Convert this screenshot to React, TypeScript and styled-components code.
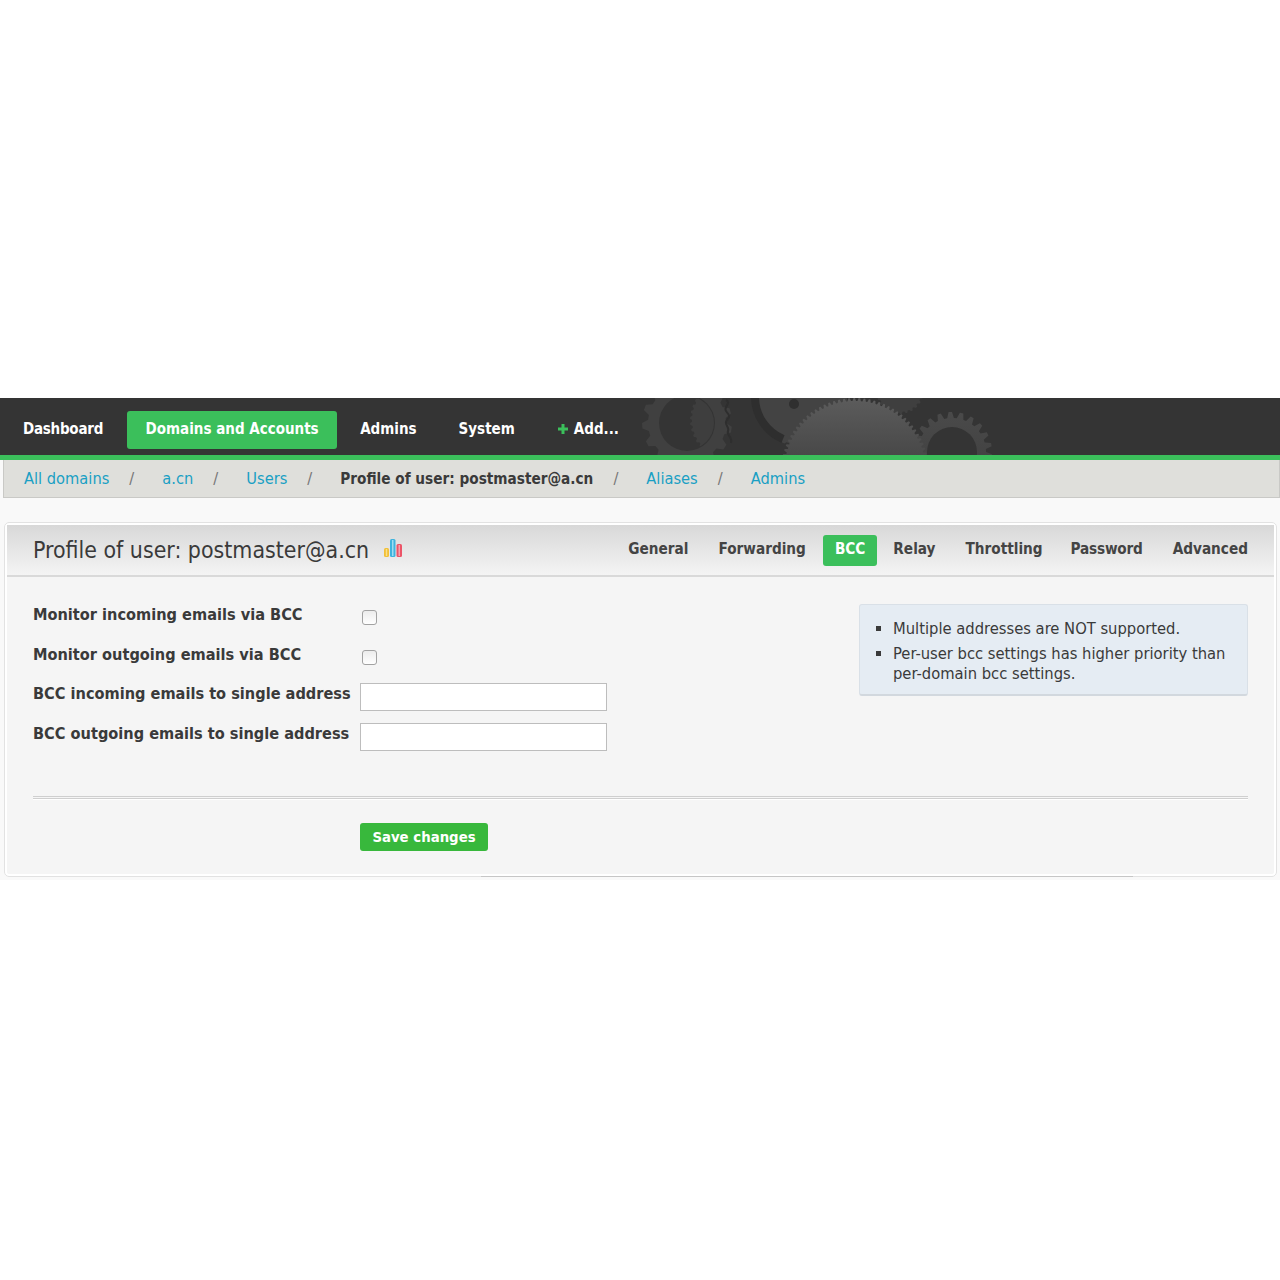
import styled, { createGlobalStyle } from "styled-components";

const GlobalStyle = createGlobalStyle`
  html, body { margin: 0; padding: 0; background: #fff; }
  body { font-family: "DejaVu Sans Condensed", "Noto Sans", sans-serif; color: #333; }
`;

const Page = styled.div`
  min-height: 1280px;
  display: flex;
  flex-direction: column;
  justify-content: center;
`;

const Shot = styled.div`
  height: 482px;
  margin-top: -2px;
  background: #f9f9f9;
  display: flex;
  flex-direction: column;
`;

const TopBar = styled.nav`
  position: relative;
  height: 62px;
  flex: none;
  box-sizing: border-box;
  background: #343434;
  border-bottom: 5px solid #3bbf5b;
  display: flex;
  align-items: flex-start;
  gap: 6px;
  padding: 13px 0 0 5px;
  overflow: hidden;
`;

const NavItem = styled.a<{ $active?: boolean; $tight?: boolean }>`
  position: relative;
  height: 38px;
  line-height: 37px;
  padding: 0 ${(p) => (p.$active ? "18.5px" : "18px")};
  margin-right: ${(p) => (p.$active ? "-1px" : "0")};
  border-radius: 3px;
  font-size: 15px;
  font-weight: 700;
  color: #fff;
  letter-spacing: ${(p) => (p.$tight ? "-0.25px" : "0")};
  background: ${(p) => (p.$active ? "#3bbf5b" : "transparent")};
`;

const PlusIcon = styled.svg`
  margin-right: 5px;
  vertical-align: -1px;
`;

const Gears = styled.svg`
  position: absolute;
  left: 630px;
  top: 0;
`;

const Crumbs = styled.div`
  height: 38px;
  flex: none;
  box-sizing: border-box;
  background: #dfdfdb;
  border: 1px solid #c9c9c6;
  border-top: 0;
  margin: 0 0 0 3px;
  padding: 0 0 0 20px;
  display: flex;
  align-items: center;
  font-size: 16.3px;
`;

const CrumbLink = styled.a`
  color: #1a9fc4;
`;

const CrumbCurrent = styled.span`
  color: #3a3a3a;
  font-size: 15.2px;
  font-weight: 700;
`;

const Slash = styled.span`
  box-sizing: border-box;
  color: #777;
  width: 53px;
  padding-right: 8px;
  text-align: center;
`;

const Card = styled.section`
  position: relative;
  margin: 24px 3px 0 4px;
  height: 355px;
  box-sizing: border-box;
  background: #f5f5f5;
  border: 3px solid #fff;
  outline: 1px solid #e2e2e2;
  outline-offset: -1px;
  border-radius: 5px;
  display: flex;
  flex-direction: column;

  &::after {
    content: "";
    position: absolute;
    left: 474px;
    right: 141px;
    bottom: -3px;
    height: 1px;
    background: #c6c6c6;
  }
`;

const CardHeader = styled.header`
  height: 52px;
  flex: none;
  box-sizing: border-box;
  background: linear-gradient(#d8d8d8, #f4f4f4);
  border-bottom: 2px solid #d9d9d9;
  display: flex;
  align-items: center;
  padding: 0 11px 0 26px;
`;

const Title = styled.h1`
  margin: 0 0 1px;
  font-size: 22.9px;
  font-weight: 400;
  color: #3a3a3a;
`;

const StatsIcon = styled.svg`
  margin: -5px 0 0 15px;
`;

const Tabs = styled.div`
  margin-left: auto;
  display: flex;
  align-items: center;
`;

const Tab = styled.a<{ $active?: boolean; $tight?: boolean; $pull?: boolean }>`
  height: 31px;
  line-height: 29px;
  padding: 0 ${(p) => (p.$active ? "12px" : "15px")};
  margin: 0 ${(p) => (p.$active ? "1px" : p.$pull ? "-2px" : "0")} 0 ${(p) => (p.$active ? "2px" : "0")};
  border-radius: 3px;
  font-size: 15.2px;
  font-weight: 700;
  letter-spacing: ${(p) => (p.$tight ? "-0.2px" : "0")};
  color: ${(p) => (p.$active ? "#fff" : "#444")};
  background: ${(p) => (p.$active ? "#3bbf5b" : "transparent")};
`;

const CardBody = styled.div`
  flex: 1;
  padding: 19px 26px 0 26px;
  display: flex;
  flex-direction: column;
`;

const Columns = styled.div`
  display: flex;
  justify-content: space-between;
  height: 200px;
  flex: none;
  border-bottom: 3px double #cfcfcf;
  box-shadow: 0 1px 0 #fff;
`;

const FormGrid = styled.div`
  display: grid;
  grid-template-columns: 327px 247px;
  grid-auto-rows: 39.6px;
  align-content: start;
`;

const RowLabel = styled.label`
  font-size: 16.2px;
  font-weight: 700;
  color: #3a3a3a;
  white-space: nowrap;
  padding-top: 8px;
  line-height: 22px;
`;

const CheckCell = styled.div`
  padding-top: 14px;
`;

const Check = styled.span`
  display: block;
  width: 13px;
  height: 13px;
  margin-left: 2px;
  background: linear-gradient(#ececec, #fff);
  border: 1px solid #a2a2a2;
  border-radius: 3px;
`;

const TextField = styled.input`
  display: block;
  width: 100%;
  height: 28px;
  margin-top: 8px;
  box-sizing: border-box;
  background: #fff;
  border: 1px solid #bdbdbd;
  border-radius: 0;
`;

const Note = styled.div`
  width: 389px;
  height: 92px;
  margin-top: 8px;
  box-sizing: border-box;
  background: #e5ecf3;
  border: 1px solid #d9e0e7;
  border-bottom: 2px solid #d2d8de;
  border-radius: 3px;
`;

const NoteList = styled.ul`
  margin: 0;
  padding: 14px 8px 0 33px;
  list-style: square;
  font-size: 16.4px;
  line-height: 20px;
  color: #3a3a3a;
`;

const NoteItem = styled.li`
  margin-bottom: 5px;
`;

const Actions = styled.div`
  padding: 24px 0 0 327px;
`;

const SaveButton = styled.button`
  display: block;
  width: 128px;
  height: 28px;
  padding: 0 0 2px;
  border: 0;
  border-radius: 3px;
  background: #38b83c;
  color: #fff;
  font-family: inherit;
  font-size: 14.8px;
  font-weight: 700;
`;

const gearPath = (cx: number, cy: number, r: number, teeth: number, depth: number) => {
  const pts: string[] = [];
  const step = (Math.PI * 2) / teeth;
  for (let i = 0; i < teeth; i++) {
    const a = i * step;
    [
      [a, r - depth],
      [a + step * 0.2, r],
      [a + step * 0.5, r],
      [a + step * 0.7, r - depth],
    ].forEach(([t, rad]) => {
      pts.push(`${(cx + Math.cos(t) * rad).toFixed(1)},${(cy + Math.sin(t) * rad).toFixed(1)}`);
    });
  }
  return `M${pts.join("L")}Z`;
};

const tabs = ["General", "Forwarding", "BCC", "Relay", "Throttling", "Password", "Advanced"];

export default function App() {
  return (
    <Page>
      <GlobalStyle />
      <Shot>
        <TopBar>
          <Gears width="380" height="57" viewBox="0 0 380 57">
            <defs>
              <linearGradient id="gearBig" x1="0" y1="0" x2="0" y2="1">
                <stop offset="0" stopColor="#5c5c5c" />
                <stop offset="0.75" stopColor="#363636" />
              </linearGradient>
              <linearGradient id="gearFade" x1="0" y1="0" x2="0" y2="1">
                <stop offset="0" stopColor="#4a4a4a" />
                <stop offset="1" stopColor="#3d3d3d" />
              </linearGradient>
              <clipPath id="gearHole">
                <circle cx="57" cy="25" r="27" />
              </clipPath>
            </defs>
            <path d={gearPath(57, 25, 45, 15, 6)} fill="#404040" />
            <circle cx="57" cy="25" r="28" fill="#343434" />
            <path d={gearPath(100, 22, 40, 40, 2)} fill="#3e3e3e" clipPath="url(#gearHole)" />
            <path d="M96 2c6 3-3 7 0 11s5 5 1 9 3 7 1 11 5 6 3 12" fill="none" stroke="#2e2e2e" strokeWidth="2" />
            <path d={gearPath(172, 2, 47, 36, 2)} fill="#434343" />
            <path d="M125 0a46 46 0 0 0 28 41" fill="none" stroke="#2e2e2e" strokeWidth="8" />
            <circle cx="164" cy="6" r="5" fill="#2f2f2f" />
            <path d={gearPath(270, -8, 24, 26, 2)} fill="#3f3f3f" />
            <path d={gearPath(322, 54, 40, 22, 6)} fill="url(#gearFade)" />
            <circle cx="322" cy="54" r="25" fill="#343434" />
            <path d={gearPath(225, 74, 74, 90, 3)} fill="url(#gearBig)" />
          </Gears>
          <NavItem $tight>Dashboard</NavItem>
          <NavItem $active>Domains and Accounts</NavItem>
          <NavItem>Admins</NavItem>
          <NavItem>System</NavItem>
          <NavItem>
            <PlusIcon width="12" height="12" viewBox="0 0 12 12">
              <path d="M4.500 1h3v3.500H11v3H7.500V11h-3V7.500H1v-3h3.500z" fill="#3bbf5b" />
            </PlusIcon>
            Add...
          </NavItem>
        </TopBar>
        <Crumbs>
          <CrumbLink>All domains</CrumbLink>
          <Slash>/</Slash>
          <CrumbLink>a.cn</CrumbLink>
          <Slash>/</Slash>
          <CrumbLink>Users</CrumbLink>
          <Slash>/</Slash>
          <CrumbCurrent>Profile of user: postmaster@a.cn</CrumbCurrent>
          <Slash>/</Slash>
          <CrumbLink>Aliases</CrumbLink>
          <Slash>/</Slash>
          <CrumbLink>Admins</CrumbLink>
        </Crumbs>
        <Card>
          <CardHeader>
            <Title>Profile of user: postmaster@a.cn</Title>
            <StatsIcon width="18" height="18" viewBox="0 0 18 18">
              <rect x="0" y="9" width="5" height="9" rx="1.500" fill="#f2c037" />
              <rect x="1.800" y="10" width="1.400" height="7" fill="#f9e08a" />
              <rect x="6" y="0" width="5.500" height="18" rx="1.500" fill="#3fb4de" />
              <rect x="8" y="1" width="1.500" height="16" fill="#9fdcf2" />
              <rect x="12.500" y="5" width="5.500" height="13" rx="1.500" fill="#ec5468" />
              <rect x="14.500" y="6" width="1.500" height="11" fill="#f6a3ae" />
            </StatsIcon>
            <Tabs>
              {tabs.map((t) => (
                <Tab key={t} $active={t === "BCC"} $tight={t === "Password"} $pull={t === "Throttling"}>
                  {t}
                </Tab>
              ))}
            </Tabs>
          </CardHeader>
          <CardBody>
            <Columns>
              <FormGrid>
                <RowLabel>Monitor incoming emails via BCC</RowLabel>
                <CheckCell>
                  <Check />
                </CheckCell>
                <RowLabel>Monitor outgoing emails via BCC</RowLabel>
                <CheckCell>
                  <Check />
                </CheckCell>
                <RowLabel>BCC incoming emails to single address</RowLabel>
                <div>
                  <TextField />
                </div>
                <RowLabel>BCC outgoing emails to single address</RowLabel>
                <div>
                  <TextField />
                </div>
              </FormGrid>
              <Note>
                <NoteList>
                  <NoteItem>Multiple addresses are NOT supported.</NoteItem>
                  <NoteItem>Per-user bcc settings has higher priority than per-domain bcc settings.</NoteItem>
                </NoteList>
              </Note>
            </Columns>
            <Actions>
              <SaveButton>Save changes</SaveButton>
            </Actions>
          </CardBody>
        </Card>
      </Shot>
    </Page>
  );
}
